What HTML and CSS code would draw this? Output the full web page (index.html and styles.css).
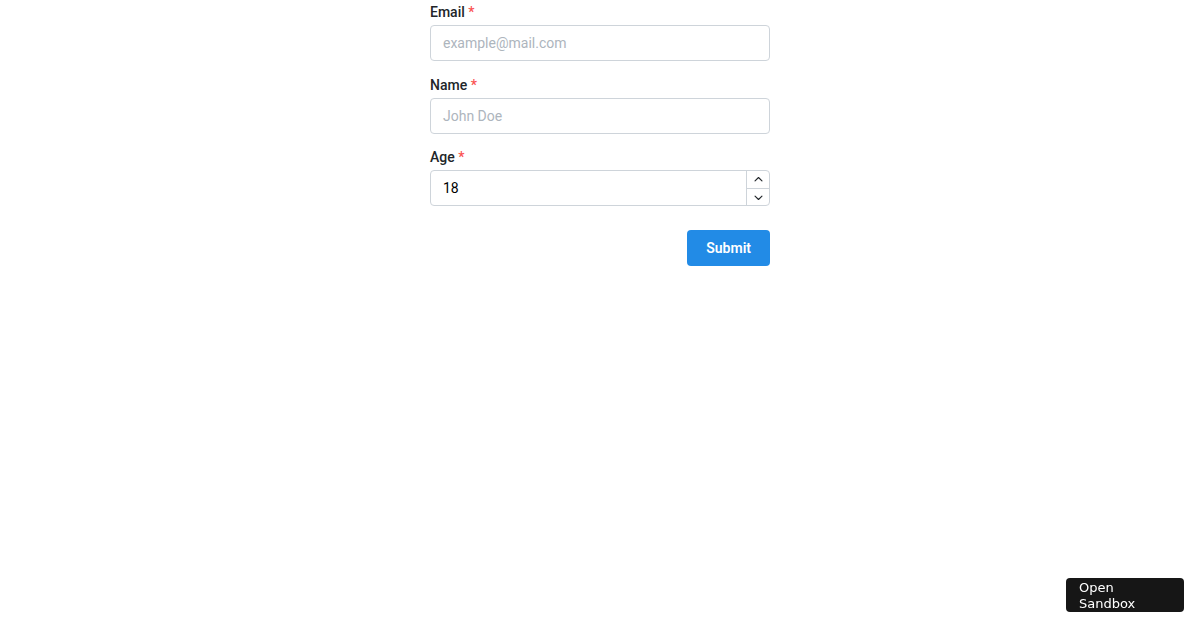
FILE: index.html
```html
<!DOCTYPE html>
<html>
<head>
<meta charset="utf-8">
<link rel="stylesheet" href="styles.css">
</head>
<body>
<form class="form">
  <div class="field">
    <label class="label">Email <span class="req">*</span></label>
    <div class="input"><span class="placeholder">example@mail.com</span></div>
  </div>
  <div class="field">
    <label class="label">Name <span class="req">*</span></label>
    <div class="input"><span class="placeholder">John Doe</span></div>
  </div>
  <div class="field">
    <label class="label">Age <span class="req">*</span></label>
    <div class="input number">
      <span class="value">18</span>
      <div class="controls">
        <div class="ctrl">
          <svg width="13" height="13" viewBox="0 0 15 15"><path d="M3.5 9.2 L7.5 5.2 L11.5 9.2" fill="none" stroke="#212529" stroke-width="1.3" stroke-linecap="round" stroke-linejoin="round"/></svg>
        </div>
        <div class="ctrl">
          <svg width="13" height="13" viewBox="0 0 15 15"><path d="M3.5 5.8 L7.5 9.8 L11.5 5.8" fill="none" stroke="#212529" stroke-width="1.3" stroke-linecap="round" stroke-linejoin="round"/></svg>
        </div>
      </div>
    </div>
  </div>
  <div class="actions">
    <button type="button" class="submit">Submit</button>
  </div>
</form>
<button type="button" class="sandbox">Open Sandbox</button>
</body>
</html>
```
FILE: styles.css
```css
html, body {
  margin: 0;
  padding: 0;
  background: #fff;
}
body {
  font-family: Roboto, "Liberation Sans", sans-serif;
  color: #212529;
}
.form {
  width: 340px;
  margin: 0 auto;
  padding-top: 3px;
  display: flex;
  flex-direction: column;
  gap: 14.4px;
}
.field {
  display: flex;
  flex-direction: column;
}
.label {
  font-size: 14px;
  font-weight: 500;
  line-height: 18px;
  padding-bottom: 4.2px;
  color: #212529;
}
.req {
  color: #fa5252;
}
.input {
  box-sizing: border-box;
  height: 36px;
  border: 1px solid #ced4da;
  border-radius: 4px;
  padding: 0 12px;
  display: flex;
  align-items: center;
  font-size: 14px;
}
.placeholder {
  color: #adb5bd;
}
.value {
  color: #000;
  flex: 1;
}
.number {
  padding-right: 0;
}
.controls {
  width: 22px;
  height: 100%;
  border-left: 1px solid #ced4da;
  display: flex;
  flex-direction: column;
}
.ctrl {
  flex: 1;
  display: flex;
  align-items: center;
  justify-content: center;
}
.ctrl + .ctrl {
  border-top: 1px solid #ced4da;
}
.actions {
  display: flex;
  justify-content: flex-end;
  margin-top: 9.2px;
}
.submit {
  height: 36px;
  padding: 0 19px;
  border: none;
  border-radius: 4px;
  background: #228be6;
  color: #fff;
  font-family: Roboto, "Liberation Sans", sans-serif;
  font-size: 14px;
  font-weight: 600;
}
.sandbox {
  position: fixed;
  right: 16px;
  bottom: 18px;
  width: 118px;
  height: 34px;
  box-sizing: border-box;
  padding: 2px 13px 0;
  background: #161616;
  color: #fff;
  border: none;
  border-radius: 4px;
  font-family: "DejaVu Sans", sans-serif;
  font-size: 13px;
  line-height: 16px;
  text-align: left;
}
```
